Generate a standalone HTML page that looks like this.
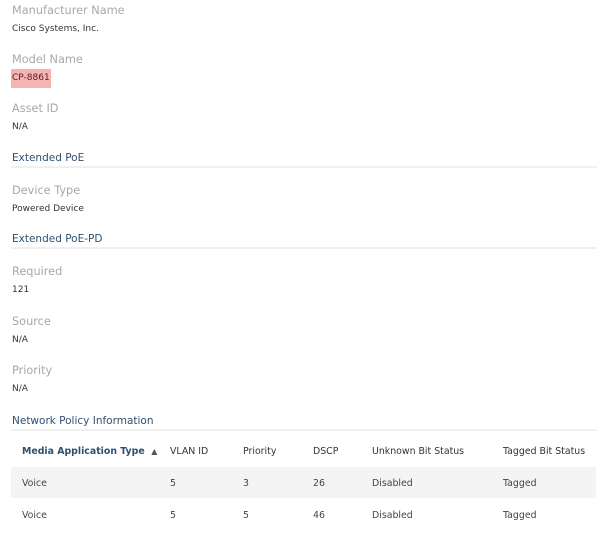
<!DOCTYPE html>
<html><head><meta charset="utf-8"><style>
body{margin:0;width:600px;height:539px;background:#fff;font-family:"DejaVu Sans","Liberation Sans",sans-serif;position:relative;overflow:hidden}
.a{position:absolute;left:12px;white-space:nowrap;line-height:1}
.l{font-size:11.3px;color:#a8a8a8}
.v{font-size:9px;color:#333}
.h{font-size:10.5px;color:#2f4f6f}
.line{position:absolute;left:11px;width:586px;height:2px;background:#f0f0f0}
.t{position:absolute;font-size:9.4px;color:#444;white-space:nowrap;line-height:1}
.th{color:#333}
</style></head><body>
<div class="a l" style="top:5px">Manufacturer Name</div>
<div class="a v" style="top:25px">Cisco Systems, Inc.</div>
<div class="a l" style="top:54px">Model Name</div>
<div style="position:absolute;left:11px;top:69px;width:40px;height:19px;background:#f6b3b3"></div>
<div class="a v" style="top:74px;color:#5a2020">CP-8861</div>
<div class="a l" style="top:103px">Asset ID</div>
<div class="a v" style="top:123px">N/A</div>
<div class="a h" style="top:153px">Extended PoE</div>
<div class="line" style="top:166px"></div>
<div class="a l" style="top:185px">Device Type</div>
<div class="a v" style="top:205px">Powered Device</div>
<div class="a h" style="top:234px">Extended PoE-PD</div>
<div class="line" style="top:247px"></div>
<div class="a l" style="top:266px">Required</div>
<div class="a v" style="top:286px">121</div>
<div class="a l" style="top:316px">Source</div>
<div class="a v" style="top:336px">N/A</div>
<div class="a l" style="top:365px">Priority</div>
<div class="a v" style="top:385px">N/A</div>
<div class="a h" style="top:416px">Network Policy Information</div>
<div class="line" style="top:429px"></div>
<div style="position:absolute;left:11px;top:467px;width:585px;height:31px;background:#f4f4f4"></div>
<div class="t" style="left:22px;top:447px;color:#2f4f6f;font-weight:600">Media Application Type &nbsp;<span style="font-size:8px;color:#555;font-weight:normal">▲</span></div>
<div class="t th" style="left:170px;top:447px">VLAN ID</div>
<div class="t th" style="left:243px;top:447px">Priority</div>
<div class="t th" style="left:313px;top:447px">DSCP</div>
<div class="t th" style="left:372px;top:447px">Unknown Bit Status</div>
<div class="t th" style="left:503px;top:447px">Tagged Bit Status</div>
<div class="t" style="left:22px;top:479px">Voice</div>
<div class="t" style="left:170px;top:479px">5</div>
<div class="t" style="left:243px;top:479px">3</div>
<div class="t" style="left:313px;top:479px">26</div>
<div class="t" style="left:372px;top:479px">Disabled</div>
<div class="t" style="left:503px;top:479px">Tagged</div>
<div class="t" style="left:22px;top:511px">Voice</div>
<div class="t" style="left:170px;top:511px">5</div>
<div class="t" style="left:243px;top:511px">5</div>
<div class="t" style="left:313px;top:511px">46</div>
<div class="t" style="left:372px;top:511px">Disabled</div>
<div class="t" style="left:503px;top:511px">Tagged</div>
</body></html>
